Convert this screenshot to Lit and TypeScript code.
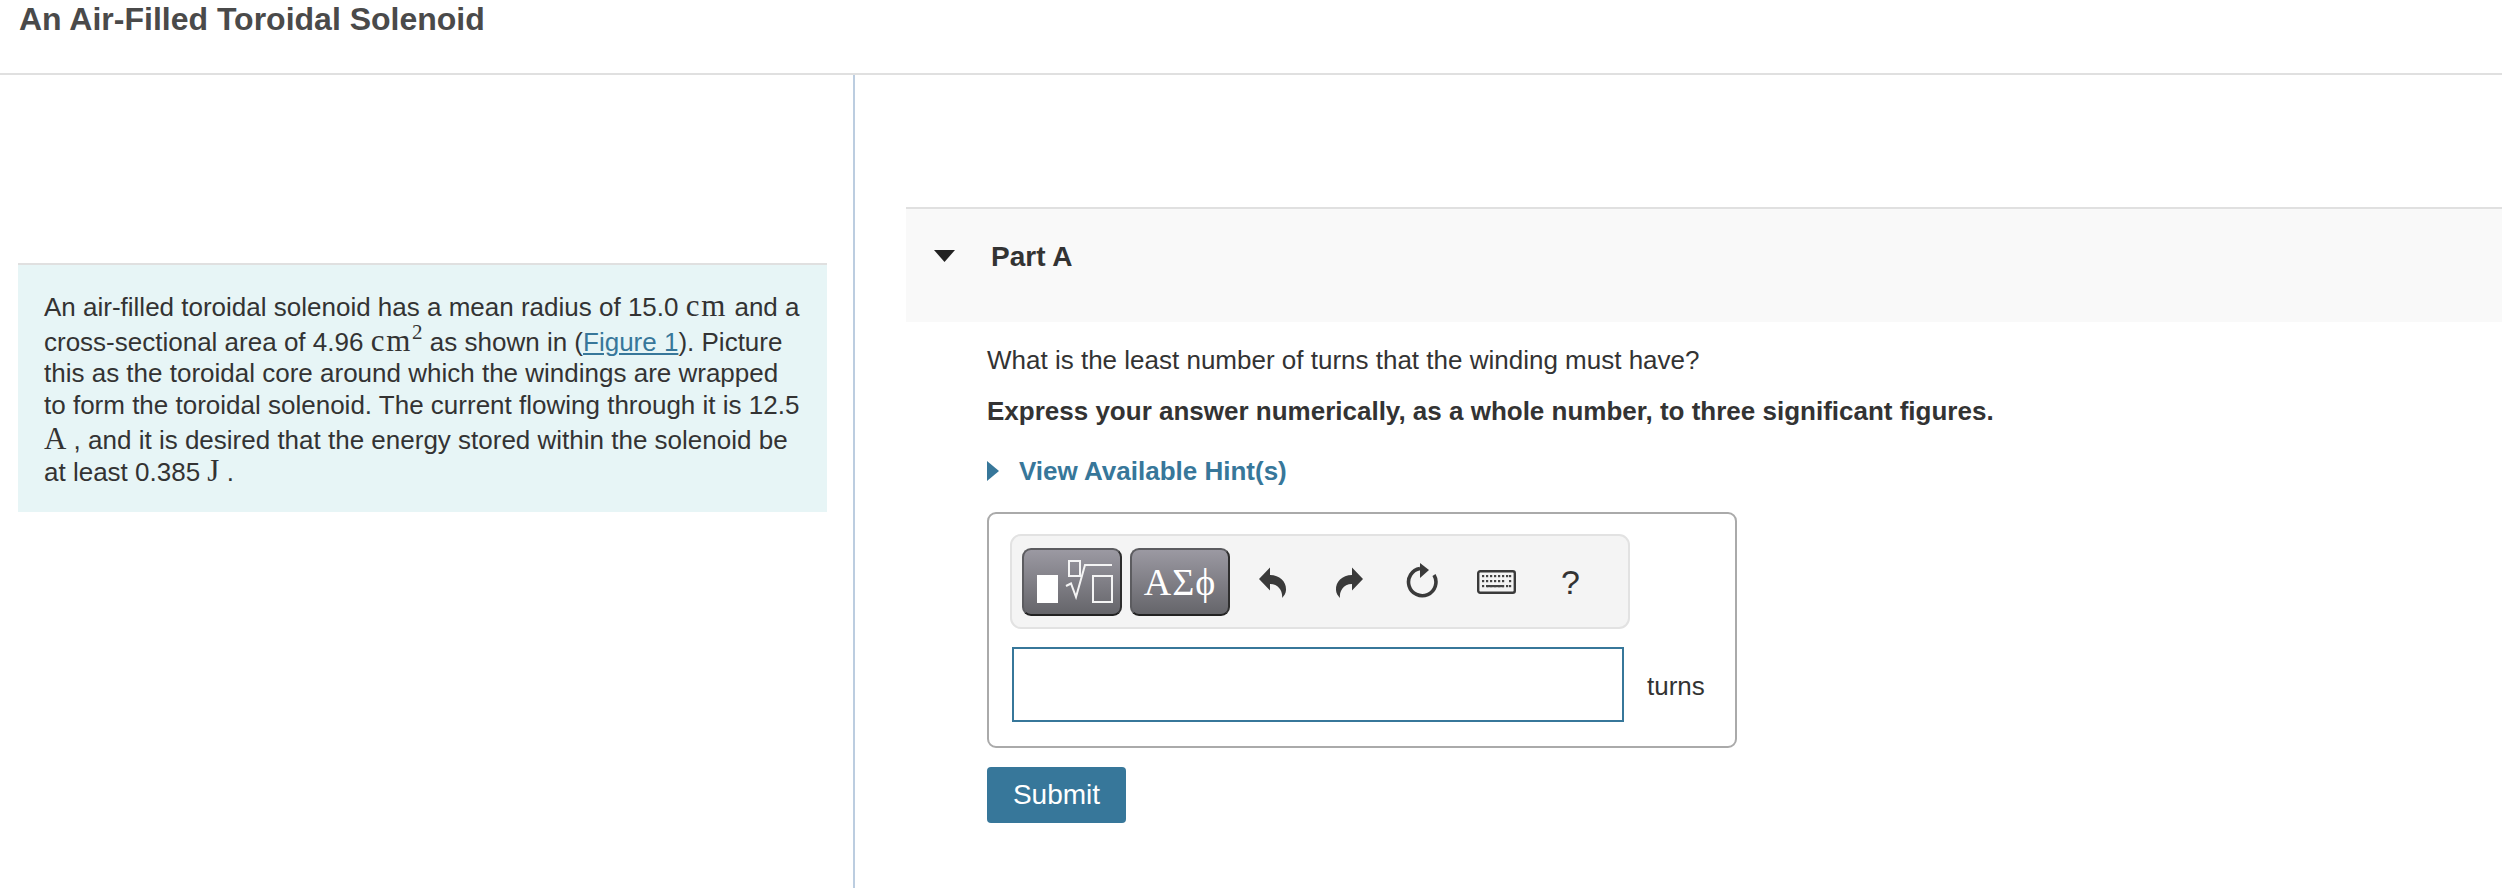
import { LitElement, html, css, svg } from "lit";
import { customElement } from "lit/decorators.js";

const keyDots = [
  [6, 6], [10, 6], [14, 6], [18, 6], [22, 6], [26, 6], [30, 6], [33, 6],
  [6, 11], [10, 11], [14, 11], [18, 11], [22, 11], [26, 11], [33, 11],
  [6, 16], [10, 16], [14, 16], [18, 16], [22, 16], [26, 16], [30, 16], [33, 16],
];

@customElement("app-root")
export class AppRoot extends LitElement {
  static styles = css`
    :host { display: block; width: 2502px; height: 888px; overflow: hidden; background: #fff;
      font-family: "Liberation Sans", Arial, sans-serif; color: #333; font-size: 26px; }
    * { box-sizing: border-box; }
    .head { height: 75px; border-bottom: 2px solid #e0e0e0; padding: 1px 0 0 19px; }
    .head h1 { margin: 0; font-size: 32px; line-height: 37px; font-weight: 700; color: #4a4a4a; }
    .main { display: flex; height: 813px; }
    .left { width: 855px; border-right: 2px solid #bccde0; padding: 188px 0 0 18px; flex: none; }
    .intro { width: 809px; height: 249px; background: #e7f5f6; border-top: 2px solid #e0e0e0;
      padding: 27px 10px 0 26px; line-height: 31.2px; white-space: nowrap; }
    .math { font-family: "Liberation Serif", serif; font-size: 31px; line-height: 20px; }
    .wide { letter-spacing: 1.8px; }
    .tall { line-height: 36px; }
    .intro sup { font-size: 21px; line-height: 18px; vertical-align: 12px; letter-spacing: 0; }
    a { color: #37779a; }
    .right { flex: 1; padding: 132px 0 0 51px; min-width: 0; }
    .part { height: 115px; background: #f9f9f9; border-top: 2px solid #e0e0e0; display: flex;
      align-items: flex-start; padding: 32px 0 0 28px; }
    .part svg { margin-top: 9px; flex: none; }
    .part b { margin-left: 36px; font-size: 28px; line-height: 32px; font-weight: 700; }
    .body { padding: 22px 0 0 81px; }
    p { margin: 0; line-height: 32px; font-size: 26px; }
    .ask { margin-top: 19px; font-weight: 700; }
    .hint { display: flex; align-items: center; margin-top: 28px; color: #37779a; font-weight: 700; line-height: 32px; }
    .hint svg { margin-right: 20px; flex: none; }
    .answer { width: 750px; height: 236px; margin-top: 25px; border: 2px solid #aaa; border-radius: 9px;
      padding: 20px 0 0 21px; }
    .tools { width: 620px; height: 95px; border: 2px solid #e2e2e2; border-radius: 11px; background: #f4f4f4;
      display: flex; align-items: center; padding-left: 10px; }
    .tbtn { width: 100px; height: 68px; border-radius: 9px; border: 2px solid #5c5c60; border-right-color: #2e2e2e;
      border-bottom-color: #222; background: linear-gradient(#9b99a2, #65656a); margin-right: 8px; flex: none;
      color: #fff; display: flex; align-items: center; justify-content: center;
      font-family: "Liberation Serif", serif; font-size: 38px; letter-spacing: 1px; }
    .tbtn svg { display: block; margin: -2px; }
    .icon { flex: none; display: block; }
    .undo { margin-left: 16px; }
    .redo { margin-left: 42px; }
    .redraw { margin-left: 35px; }
    .kbd { margin-left: 38px; }
    .q { margin-left: 45px; font-size: 34px; line-height: 36px; color: #333; }
    .entry { display: flex; align-items: center; margin-top: 18px; }
    .input { width: 612px; height: 75px; margin-left: 2px; border: 2px solid #37779a; background: #fff; }
    .unit { margin: 3px 0 0 23px; }
    .submit { display: block; margin-top: 19px; width: 139px; height: 56px; background: #37779a; color: #fff; border: none; border-radius: 4px;
      font: 28px "Liberation Sans", Arial, sans-serif; padding: 0; }
  `;

  render() {
    return html`
      <div class="head"><h1>An Air-Filled Toroidal Solenoid</h1></div>
      <div class="main">
        <div class="left">
          <div class="intro">
            An air-filled toroidal solenoid has a mean radius of 15.0 <span class="math wide">cm</span> and a<br>
            cross-sectional area of 4.96 <span class="math wide">cm<sup>2</sup></span> as shown in (<a href="#">Figure 1</a>). Picture<br>
            this as the toroidal core around which the windings are wrapped<br>
            to form the toroidal solenoid. The current flowing through it is 12.5<br>
            <span class="math tall">A</span> , and it is desired that the energy stored within the solenoid be<br>
            at least 0.385 <span class="math">J</span> .
          </div>
        </div>
        <div class="right">
          <div class="part">
            <svg width="21" height="12" viewBox="0 0 21 12"><path d="M0 0H21L10.5 12Z" fill="#222"/></svg>
            <b>Part A</b>
          </div>
          <div class="body">
            <p>What is the least number of turns that the winding must have?</p>
            <p class="ask">Express your answer numerically, as a whole number, to three significant figures.</p>
            <div class="hint">
              <svg width="12" height="20" viewBox="0 0 12 20"><path d="M0 0L12 10L0 20Z" fill="#37779a"/></svg>
              View Available Hint(s)
            </div>
            <div class="answer">
              <div class="tools">
                <div class="tbtn">
                  <svg width="100" height="68" viewBox="0 0 100 68">
                    <rect x="15" y="27" width="21" height="28" fill="#fff"/>
                    <g fill="none" stroke="#f4f4f4" stroke-width="2">
                      <rect x="47" y="13" width="11" height="15"/>
                      <path d="M44 38L49 35.5L54 49L63 17H90"/>
                      <rect x="71" y="28" width="19" height="26"/>
                    </g>
                  </svg>
                </div>
                <div class="tbtn">ΑΣϕ</div>
                <svg class="icon undo" width="36" height="40" viewBox="14 50 36 40" fill="#3a3a3a">
                  <path d="M19 67L30 55.5V63C40 63 46.5 70 46 78C46 81 44 84 42 86C43 80 39 72 30 72V78.5Z"/>
                </svg>
                <svg class="icon redo" width="36" height="40" viewBox="92 50 36 40" fill="#3a3a3a">
                  <path d="M123 67L112 55.5V63C102 63 95.5 70 96 78C96 81 98 84 100 86C99 80 103 72 112 72V78.5Z"/>
                </svg>
                <svg class="icon redraw" width="36" height="40" viewBox="164 52 36 40" fill="none">
                  <path d="M195 65A13.7 13.7 0 1 1 181 58.5" stroke="#3a3a3a" stroke-width="3.6"/>
                  <path d="M181 53L190 60L181 68Z" fill="#3a3a3a"/>
                </svg>
                <svg class="icon kbd" width="39" height="24" viewBox="0 0 39 24">
                  <rect x="1.2" y="1.2" width="36.6" height="21.6" rx="2" fill="none" stroke="#3a3a3a" stroke-width="2.4"/>
                  ${keyDots.map(([x, y]) => svg`<rect x=${x - 1} y=${y - 1} width="2.2" height="2.2" fill="#444"/>`)}
                  <rect x="10" y="15" width="17" height="2.2" fill="#444"/>
                </svg>
                <span class="q">?</span>
              </div>
              <div class="entry">
                <div class="input"></div>
                <span class="unit">turns</span>
              </div>
            </div>
            <button class="submit">Submit</button>
          </div>
        </div>
      </div>
    `;
  }
}
